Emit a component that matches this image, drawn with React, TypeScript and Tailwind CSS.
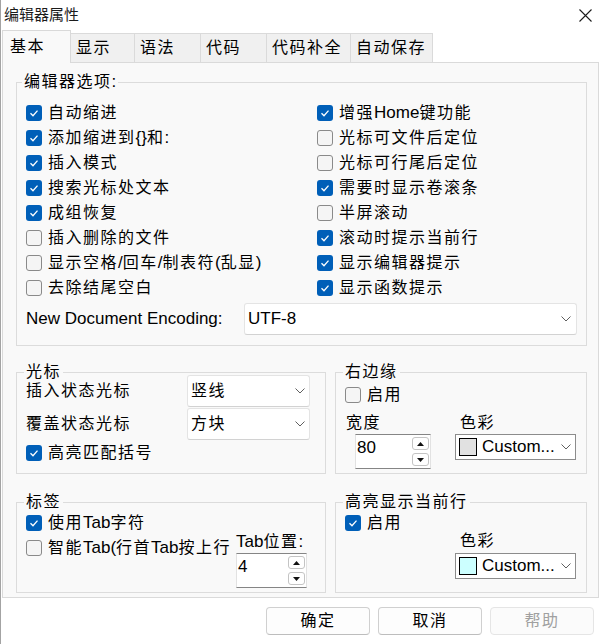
import React from 'react';

// CJK runs get a little extra spacing, latin runs a slightly bigger Arial-like face
const CJK = /([\u2e80-\u9fff\u3000-\u303f\uff00-\uffef]+)/;

function Txt({ s }: { s: string }) {
  return (
    <>
      {s.split(CJK).map((part, i) =>
        i % 2 === 1 ? (
          <span key={i} className="tracking-[1.5px]">
            {part}
          </span>
        ) : part ? (
          <span key={i} className="text-[17px]">
            {part}
          </span>
        ) : null
      )}
    </>
  );
}

function Chevron() {
  return (
    <svg width="10" height="6" viewBox="0 0 10 6" className="shrink-0">
      <polyline points="0.5,0.5 5,5 9.5,0.5" fill="none" stroke="#5f5f5f" strokeWidth="1" />
    </svg>
  );
}

function Check({ checked, label, className = 'h-[25px]' }: { checked: boolean; label: string; className?: string }) {
  return (
    <div className={`flex items-center gap-[6px] whitespace-nowrap ${className}`}>
      {checked ? (
        <span className="w-[16px] h-[16px] shrink-0 rounded-[3px] bg-[#005fb8] flex items-center justify-center">
          <svg width="16" height="16" viewBox="0 0 16 16">
            <polyline points="4.5,8.3 7,10.8 11.5,5.6" fill="none" stroke="white" strokeWidth="1.3" />
          </svg>
        </span>
      ) : (
        <span className="w-[16px] h-[16px] shrink-0 rounded-[3px] bg-[#f5f5f5] border border-[#8a8a8a]" />
      )}
      <span className="leading-[20px]">
        <Txt s={label} />
      </span>
    </div>
  );
}

function Select({ value, className }: { value: string; className: string }) {
  return (
    <div
      className={`h-[32px] flex items-center justify-between bg-white border border-[#e4e4e4] border-b-[#d2d2d2] rounded-[3px] pl-[3px] ${className}`}
    >
      <span className="leading-[20px]">
        <Txt s={value} />
      </span>
      <Chevron />
    </div>
  );
}

function Triangle({ up }: { up?: boolean }) {
  return (
    <svg width="7" height="4" viewBox="0 0 7 4">
      <path d={up ? 'M0 4 L3.5 0 L7 4 Z' : 'M0 0 L3.5 4 L7 0 Z'} fill="#111" />
    </svg>
  );
}

function Spin({ value, className }: { value: string; className: string }) {
  return (
    <div className={`h-[35px] flex bg-white border-y border-[#858585] border-x border-x-[#e2e2e2] ${className}`}>
      <span className="flex-1 pl-[1px] pt-[3px] leading-[20px]">
        <Txt s={value} />
      </span>
      <div className="flex flex-col gap-[3px] pt-[2px] pr-[1px]">
        <span className="w-[17px] h-[13px] rounded-[3px] border border-[#c4c4c4] bg-white flex items-center justify-center">
          <Triangle up />
        </span>
        <span className="w-[17px] h-[13px] rounded-[3px] border border-[#c4c4c4] bg-white flex items-center justify-center">
          <Triangle />
        </span>
      </div>
    </div>
  );
}

function ColorSelect({ swatch }: { swatch: string }) {
  return (
    <div className="w-[121px] h-[26px] flex items-center gap-[5px] bg-white border border-[#8c8c8c] pl-[3px] pr-[4px]">
      <span className="w-[18px] h-[18px] shrink-0 border border-black" style={{ backgroundColor: swatch }} />
      <span className="flex-1 leading-[20px]">
        <Txt s="Custom..." />
      </span>
      <Chevron />
    </div>
  );
}

const leftOptions = [
  { label: '自动缩进', checked: true },
  { label: '添加缩进到{}和:', checked: true },
  { label: '插入模式', checked: true },
  { label: '搜索光标处文本', checked: true },
  { label: '成组恢复', checked: true },
  { label: '插入删除的文件', checked: false },
  { label: '显示空格/回车/制表符(乱显)', checked: false },
  { label: '去除结尾空白', checked: false },
];

const rightOptions = [
  { label: '增强Home键功能', checked: true },
  { label: '光标可文件后定位', checked: false },
  { label: '光标可行尾后定位', checked: false },
  { label: '需要时显示卷滚条', checked: true },
  { label: '半屏滚动', checked: false },
  { label: '滚动时提示当前行', checked: true },
  { label: '显示编辑器提示', checked: true },
  { label: '显示函数提示', checked: true },
];

const tabs = [
  { label: '显示', w: 'w-[64px]' },
  { label: '语法', w: 'w-[66px]' },
  { label: '代码', w: 'w-[66px]' },
  { label: '代码补全', w: 'w-[84px]' },
  { label: '自动保存', w: 'w-[82px]' },
];

export default function App() {
  return (
    <div className="w-[599px] h-[644px] bg-white border-l border-[#a3a3a3] flex flex-col overflow-hidden font-['Liberation_Sans','Noto_Sans_CJK_SC',sans-serif] text-[16px] text-black">
      {/* Title bar */}
      <div className="h-[30px] shrink-0 flex items-center justify-between pl-[3px] pr-[7px]">
        <span className="text-[15px] text-[#1b1b1b] leading-[20px]">编辑器属性</span>
        <svg width="13" height="13" viewBox="0 0 13 13">
          <path d="M0.5 0.5 L12.5 12.5 M12.5 0.5 L0.5 12.5" stroke="#1b1b1b" strokeWidth="1.1" />
        </svg>
      </div>

      {/* Tabs */}
      <div className="h-[32px] shrink-0 flex items-end pl-[1px]">
        <div className="relative z-10 w-[69px] h-[33px] -mb-px flex items-center pl-[7px] bg-[#f9f9f9] border border-b-0 border-[#d9d9d9]">
          <Txt s="基本" />
        </div>
        {tabs.map((t) => (
          <div
            key={t.label}
            className={`${t.w} h-[29px] flex items-center pl-[5px] bg-[#f0f0f0] border-t border-r border-[#dadada]`}
          >
            <Txt s={t.label} />
          </div>
        ))}
      </div>

      {/* Tab panel */}
      <div className="ml-[1px] w-[597px] h-[536px] shrink-0 border border-[#dadada] bg-[#f9f9f9] pl-[13px] pt-[10px] flex flex-col">
        {/* 编辑器选项 */}
        <fieldset className="w-[571px] border border-[#dcdcdc]">
          <legend className="ml-[5px] px-[2px] leading-[18px]">
            <Txt s="编辑器选项:" />
          </legend>
          <div className="pl-[9px] pt-[9px] pb-[10px]">
            <div className="flex">
              <div className="w-[291px]">
                {leftOptions.map((o) => (
                  <Check key={o.label} label={o.label} checked={o.checked} />
                ))}
              </div>
              <div>
                {rightOptions.map((o) => (
                  <Check key={o.label} label={o.label} checked={o.checked} />
                ))}
              </div>
            </div>
            <div className="mt-[3px] h-[32px] flex items-center">
              <span className="w-[218px] leading-[20px]">
                <Txt s="New Document Encoding:" />
              </span>
              <Select value="UTF-8" className="w-[333px] pr-[5px]" />
            </div>
          </div>
        </fieldset>

        {/* 光标 / 右边缘 */}
        <div className="mt-[17px] flex gap-[9px]">
          <fieldset className="w-[310px] border border-[#dcdcdc]">
            <legend className="ml-[7px] px-[2px] leading-[18px]">
              <Txt s="光标" />
            </legend>
            <div className="pl-[9px] pb-[8px]">
              <div className="-mt-[6px] h-[32px] flex items-center">
                <span className="w-[161px] leading-[20px]">
                  <Txt s="插入状态光标" />
                </span>
                <Select value="竖线" className="w-[123px] pr-[4px]" />
              </div>
              <div className="mt-[1px] h-[32px] flex items-center">
                <span className="w-[161px] leading-[20px]">
                  <Txt s="覆盖状态光标" />
                </span>
                <Select value="方块" className="w-[123px] pr-[4px]" />
              </div>
              <Check label="高亮匹配括号" checked />
            </div>
          </fieldset>

          <fieldset className="w-[252px] border border-[#dcdcdc]">
            <legend className="ml-[7px] px-[2px] leading-[18px]">
              <Txt s="右边缘" />
            </legend>
            <div className="pl-[9px] pt-[2px] pb-[3px]">
              <Check label="启用" checked={false} className="h-[24px]" />
              <div className="mt-[6px] flex">
                <div className="w-[110px]">
                  <div className="pl-[1px] leading-[20px]">
                    <Txt s="宽度" />
                  </div>
                  <Spin value="80" className="mt-[1px] ml-[10px] w-[76px]" />
                </div>
                <div>
                  <div className="pl-[5px] leading-[20px]">
                    <Txt s="色彩" />
                  </div>
                  <div className="mt-[1px]">
                    <ColorSelect swatch="#e1e1e1" />
                  </div>
                </div>
              </div>
            </div>
          </fieldset>
        </div>

        {/* 标签 / 高亮显示当前行 */}
        <div className="mt-[19px] flex gap-[9px]">
          <fieldset className="w-[310px] border border-[#dcdcdc]">
            <legend className="ml-[7px] px-[2px] leading-[18px]">
              <Txt s="标签" />
            </legend>
            <div className="pl-[9px] pb-[4px] flex">
              <div className="w-[204px] overflow-hidden whitespace-nowrap">
                <Check label="使用Tab字符" checked className="h-[24px]" />
                <Check label="智能Tab(行首Tab按上行对齐)" checked={false} />
              </div>
              <div className="pl-[6px]">
                <div className="mt-[21px] leading-[20px] whitespace-nowrap">
                  <Txt s="Tab位置:" />
                </div>
                <Spin value="4" className="mt-[1px] w-[71px]" />
              </div>
            </div>
          </fieldset>

          <fieldset className="w-[252px] border border-[#dcdcdc]">
            <legend className="ml-[7px] px-[2px] leading-[18px]">
              <Txt s="高亮显示当前行" />
            </legend>
            <div className="pl-[9px]">
              <Check label="启用" checked className="h-[24px]" />
              <div className="-mt-[4px] pl-[110px]">
                <div className="pl-[5px] leading-[20px]">
                  <Txt s="色彩" />
                </div>
                <div className="mt-[2px]">
                  <ColorSelect swatch="#ccffff" />
                </div>
              </div>
            </div>
          </fieldset>
        </div>
      </div>

      {/* Dialog buttons */}
      <div className="mt-[9px] flex justify-end gap-[8px] pr-[5px]">
        <button className="w-[104px] h-[28px] rounded-[4px] border border-[#d0d0d0] border-b-[#bdbdbd] bg-[#fdfdfd] leading-[20px]">
          <Txt s="确定" />
        </button>
        <button className="w-[104px] h-[28px] rounded-[4px] border border-[#d0d0d0] border-b-[#bdbdbd] bg-[#fdfdfd] leading-[20px]">
          <Txt s="取消" />
        </button>
        <button
          disabled
          className="w-[104px] h-[28px] rounded-[4px] border border-[#e5e5e5] bg-[#fbfbfb] text-[#a0a0a0] leading-[20px]"
        >
          <Txt s="帮助" />
        </button>
      </div>
    </div>
  );
}
